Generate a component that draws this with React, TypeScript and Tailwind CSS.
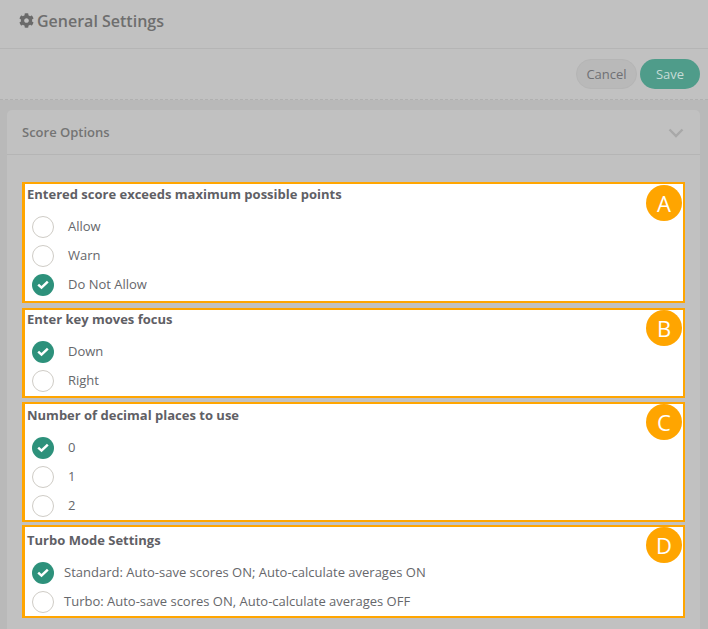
import { FaCog } from 'react-icons/fa';

type Option = { label: string; checked?: boolean };

type Group = {
  title: string;
  badge: string;
  options: Option[];
  box: string;
  titleBox: string;
  labelGap: string;
  badgeTop: string;
};

const groups: Group[] = [
  {
    title: 'Entered score exceeds maximum possible points',
    badge: 'A',
    options: [{ label: 'Allow' }, { label: 'Warn' }, { label: 'Do Not Allow', checked: true }],
    box: 'h-[121px]',
    titleBox: 'h-[27px]',
    labelGap: 'ml-[14px]',
    badgeTop: 'top-[1px]',
  },
  {
    title: 'Enter key moves focus',
    badge: 'B',
    options: [{ label: 'Down', checked: true }, { label: 'Right' }],
    box: 'h-[90px] mt-[5px]',
    titleBox: 'h-[27px] -mt-[1px]',
    labelGap: 'ml-[14px]',
    badgeTop: 'top-[0px]',
  },
  {
    title: 'Number of decimal places to use',
    badge: 'C',
    options: [{ label: '0', checked: true }, { label: '1' }, { label: '2' }],
    box: 'h-[120px] mt-[4px]',
    titleBox: 'h-[28px] pt-[1px]',
    labelGap: 'ml-[14px]',
    badgeTop: 'top-[0px]',
  },
  {
    title: 'Turbo Mode Settings',
    badge: 'D',
    options: [
      { label: 'Standard: Auto-save scores ON; Auto-calculate averages ON', checked: true },
      { label: 'Turbo: Auto-save scores ON, Auto-calculate averages OFF' },
    ],
    box: 'h-[93px] mt-[3px]',
    titleBox: 'h-[30px] pt-[3px]',
    labelGap: 'ml-[10px]',
    badgeTop: 'top-[0px]',
  },
];

const Radio = ({ checked }: { checked?: boolean }) =>
  checked ? (
    <span className="w-[22px] h-[22px] rounded-full bg-[#2d917b] flex items-center justify-center shrink-0">
      <svg width="12" height="10" viewBox="0 0 12 10" fill="none">
        <path d="M1.2 4.6 L4.5 7.6 L10.8 1.6" stroke="white" strokeWidth="2.5" />
      </svg>
    </span>
  ) : (
    <span className="w-[22px] h-[22px] rounded-full bg-white border border-[#cfccc6] shrink-0" />
  );

const SettingsBox = ({ group }: { group: Group }) => (
  <div className={`relative bg-white border-2 border-l-[3px] border-[#ffa500] pl-[7px] pt-[1px] ${group.box}`}>
    <div className={`text-[13px] leading-[18px] font-bold text-[#5f6065] -ml-[5px] ${group.titleBox}`}>
      {group.title}
    </div>
    {group.options.map((o) => (
      <div key={o.label} className="flex items-center h-[29px]">
        <Radio checked={o.checked} />
        <span className={`text-[13px] text-[#66676b] ${group.labelGap}`}>{o.label}</span>
      </div>
    ))}
    <div className={`absolute right-[1px] w-[36px] h-[36px] rounded-full bg-[#ffa500] text-white flex items-center justify-center text-[22px] leading-none ${group.badgeTop}`}>
      {group.badge}
    </div>
  </div>
);

export default function App() {
  return (
    <div className="w-[708px] h-[629px] overflow-hidden bg-[#b9b9b9] font-['Open_Sans',sans-serif]">
      {/* Title */}
      <div className="h-[49px] bg-[#c1c1c1] border-b border-[#b5b5b5] flex items-center pl-[19px] pb-[7px]">
        <FaCog className="text-[#6a6a6a] w-[15px] h-[15px]" />
        <h1 className="ml-[3px] text-[16px] font-semibold text-[#6e6e6e]">General Settings</h1>
      </div>

      {/* Toolbar */}
      <div className="h-[51px] bg-[#c1c1c1] border-b border-dashed border-[#b0b0b0] flex justify-end items-start gap-[3px] pt-[10px] pr-[8px]">
        <button className="w-[61px] h-[30px] pt-[1px] rounded-full bg-[#b9b9b9] border border-[#b5b5b5] text-[13px] text-[#6f7074]">
          Cancel
        </button>
        <button className="w-[60px] h-[30px] pt-[1px] rounded-full bg-[#4f9c8a] text-[13px] text-[#c6dbd6]">
          Save
        </button>
      </div>

      {/* Panel */}
      <div className="mt-[10px] ml-[7px] mr-[8px] h-[530px] bg-[#c1c1c1] rounded-t-[5px]">
        <div className="h-[45px] border-b border-[#b5b5b5] flex items-center justify-between pl-[15px] pr-[16px] pt-[2px]">
          <span className="text-[13px] font-semibold text-[#747474]">Score Options</span>
          <svg width="16" height="10" viewBox="0 0 16 10" fill="none">
            <path d="M1.5 1.5 L8 8 L14.5 1.5" stroke="#a8a8a8" strokeWidth="2.4" />
          </svg>
        </div>
        <div className="pt-[27px] px-[15px]">
          {groups.map((g) => (
            <SettingsBox key={g.badge} group={g} />
          ))}
        </div>
      </div>
    </div>
  );
}
